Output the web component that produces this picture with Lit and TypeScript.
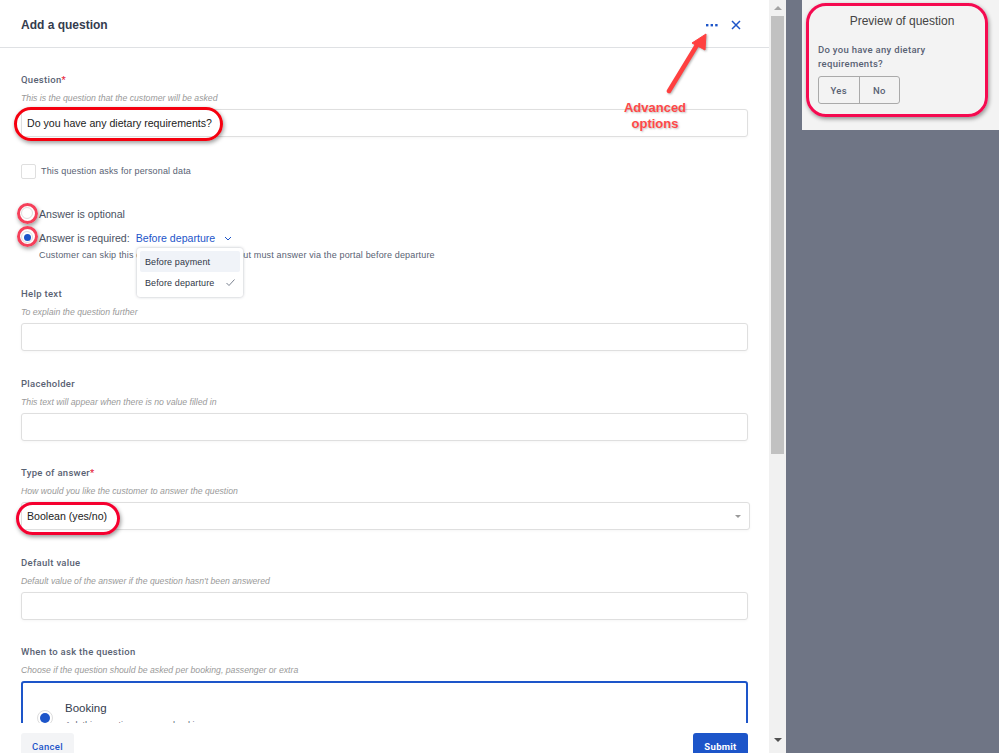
import { LitElement, html, css } from "lit";
import { customElement } from "lit/decorators.js";

@customElement("app-root")
export class AppRoot extends LitElement {
    static styles = css`
        :host {
            display: block;
            position: relative;
            width: 999px;
            height: 753px;
            overflow: hidden;
            background: #6f7585;
            font-family: "Liberation Sans", Arial, sans-serif;
            color: #333b4d;
        }

        .page {
            display: grid;
            grid-template-columns: 769px 17px 213px;
            height: 753px;
        }

        /* dialog */
        .dialog {
            display: flex;
            flex-direction: column;
            height: 753px;
            background: #fff;
            overflow: hidden;
        }

        .head {
            flex: none;
            box-sizing: border-box;
            height: 48px;
            padding: 0 28px 0 21px;
            border-bottom: 1px solid #dfe1e4;
            display: flex;
            align-items: center;
            justify-content: space-between;
        }

        .title {
            font-size: 12px;
            font-weight: bold;
            color: #343c4e;
            margin-top: 2px;
        }

        .head-icons {
            display: flex;
            align-items: center;
            gap: 13px;
            margin-top: 2px;
        }

        .body {
            flex: none;
            box-sizing: border-box;
            height: 675px;
            overflow: hidden;
            padding: 25px 21px 0;
        }

        .field {
            margin-bottom: 25.5px;
        }

        .label {
            font-family: Roboto, sans-serif;
            font-size: 9.5px;
            font-weight: 500;
            line-height: 14px;
            letter-spacing: 0.3px;
            color: #596273;
            margin-bottom: 4px;
        }

        .label i {
            font-style: normal;
            color: #e5233d;
        }

        .hint {
            font-size: 8.7px;
            font-style: italic;
            line-height: 14px;
            color: #9a9a9a;
            margin-bottom: 4px;
        }

        .input {
            box-sizing: border-box;
            height: 28px;
            border: 1px solid #dfdfdf;
            border-radius: 3px;
            padding: 0 5px;
            display: flex;
            align-items: center;
            justify-content: space-between;
            font-size: 10.6px;
            color: #222;
            background: #fff;
            box-shadow: 0 1px 3px rgba(0, 0, 0, 0.04);
        }

        .select {
            margin-right: -2px;
        }

        .caret {
            width: 0;
            height: 0;
            border-left: 3px solid transparent;
            border-right: 3px solid transparent;
            border-top: 3px solid #999;
            margin-right: 3px;
        }

        .check-row {
            display: flex;
            align-items: center;
            gap: 5px;
            height: 15px;
            margin-top: 27px;
            font-size: 9px;
            line-height: 13px;
            color: #596273;
            letter-spacing: 0.15px;
        }

        .checkbox {
            box-sizing: border-box;
            width: 15px;
            height: 15px;
            border: 1px solid #dfdfdf;
            border-radius: 2px;
        }

        .radios {
            margin-top: 28px;
            margin-bottom: 22px;
            height: 58px;
        }

        .radio-row {
            display: flex;
            align-items: center;
            height: 14px;
            font-size: 10.6px;
            color: #4a5262;
            padding-left: 18px;
            margin-bottom: 10px;
            position: relative;
        }

        .dot {
            position: absolute;
            left: 0;
            top: 0;
            box-sizing: border-box;
            width: 12px;
            height: 12px;
            border-radius: 50%;
            border: 1px solid #ddd;
            background: #fff;
        }

        .dot.on::after {
            content: "";
            position: absolute;
            left: 1.5px;
            top: 1.5px;
            width: 7px;
            height: 7px;
            border-radius: 50%;
            background: #1d55c9;
        }

        .link {
            color: #1d55c9;
            margin-left: 6px;
            margin-right: 9px;
        }

        .radio-sub {
            font-size: 9px;
            color: #596273;
            padding-left: 18px;
            margin-top: -6px;
            letter-spacing: 0.16px;
            line-height: 12px;
        }

        .required-wrap {
            position: relative;
        }

        .menu {
            position: absolute;
            left: 116px;
            top: 17px;
            box-sizing: border-box;
            width: 106px;
            height: 49px;
            padding: 3px;
            background: #fff;
            border-radius: 3px;
            box-shadow: 0 0 3px rgba(40, 50, 70, 0.35);
            font-size: 9px;
            color: #2f3646;
            letter-spacing: 0.12px;
        }

        .menu-item {
            height: 21px;
            display: flex;
            align-items: center;
            justify-content: space-between;
            padding: 0 5px;
            border-radius: 2px;
        }

        .menu-item.active {
            background: #f0f3f8;
        }

        .card {
            box-sizing: border-box;
            height: 120px;
            border: 2px solid #1d55c9;
            border-radius: 3px;
            padding: 18px 14px;
            display: flex;
            gap: 12px;
        }

        .card .big {
            flex: none;
            width: 16px;
            height: 16px;
            border-radius: 50%;
            border: 1px solid #ddd;
            box-sizing: border-box;
            margin-top: 9px;
            display: flex;
            align-items: center;
            justify-content: center;
        }

        .card .big::after {
            content: "";
            width: 10px;
            height: 10px;
            border-radius: 50%;
            background: #1d55c9;
        }

        .card-title {
            font-size: 11.5px;
            color: #343c4e;
            line-height: 14px;
            margin-bottom: 5px;
        }

        .card-sub {
            font-size: 9px;
            color: #596273;
        }

        .foot {
            flex: none;
            padding: 10px 21px 0;
            display: flex;
            justify-content: space-between;
            align-items: flex-start;
        }

        .btn {
            box-sizing: border-box;
            height: 30px;
            border-radius: 3px;
            display: flex;
            justify-content: center;
            padding-top: 8px;
            font-family: Roboto, sans-serif;
            font-size: 9.5px;
            font-weight: 500;
            letter-spacing: 0.3px;
        }

        .cancel {
            width: 53px;
            background: #f3f4f6;
            color: #1d55c9;
        }

        .submit {
            width: 55px;
            background: #1d55c9;
            color: #fff;
            font-weight: 700;
        }

        /* scrollbar */
        .scrollbar {
            background: #f1f1f1;
            display: flex;
            flex-direction: column;
            align-items: center;
        }

        .arrow-up,
        .arrow-down {
            flex: none;
            width: 0;
            height: 0;
            border-left: 4px solid transparent;
            border-right: 4px solid transparent;
        }

        .arrow-up {
            margin-top: 6px;
            border-bottom: 4px solid #a3a3a3;
        }

        .arrow-down {
            margin-top: 284px;
            border-top: 4px solid #505050;
        }

        .thumb {
            flex: none;
            width: 13px;
            height: 438px;
            margin-top: 6px;
            background: #c1c1c1;
        }

        /* right side */
        .side {
            padding-left: 16px;
        }

        .preview {
            box-sizing: border-box;
            height: 130px;
            background: #f3f3f3;
            padding: 14px 16px 0;
        }

        .preview-title {
            font-size: 12px;
            line-height: 14px;
            color: #444;
            text-align: center;
            margin-left: 3px;
            margin-bottom: 15px;
        }

        .preview-q {
            width: 120px;
            font-family: Roboto, sans-serif;
            font-size: 9.5px;
            font-weight: 500;
            line-height: 13.5px;
            letter-spacing: 0.3px;
            color: #596273;
            margin-bottom: 6px;
        }

        .toggle {
            display: flex;
            box-sizing: border-box;
            width: 82px;
            height: 28px;
            border: 1px solid #aaa;
            border-radius: 3px;
        }

        .toggle span {
            flex: 1;
            display: flex;
            align-items: center;
            justify-content: center;
            font-family: Roboto, sans-serif;
            font-size: 9.5px;
            font-weight: 500;
            letter-spacing: 0.3px;
            color: #596273;
        }

        .toggle span + span {
            border-left: 1px solid #aaa;
        }

        /* hand drawn annotations on top of the screenshot */
        .ring {
            position: absolute;
            box-sizing: border-box;
            box-shadow: 1px 2px 4px rgba(0, 0, 0, 0.4);
        }

        .ring-question {
            left: 14px;
            top: 107px;
            width: 209px;
            height: 34px;
            border: 3px solid #f5000f;
            border-radius: 17px;
        }

        .ring-answer {
            left: 16px;
            top: 502px;
            width: 104px;
            height: 33px;
            border: 3px solid #f5002f;
            border-radius: 17px;
        }

        .ring-radio {
            width: 21px;
            height: 21px;
            left: 17px;
            border: 3px solid #f5405a;
            border-radius: 50%;
        }

        .ring-preview {
            left: 806px;
            top: 3px;
            width: 182px;
            height: 114px;
            border: 3px solid #f50a50;
            border-radius: 20px;
        }

        .note {
            position: absolute;
            left: 610px;
            top: 100px;
            width: 90px;
            text-align: center;
            font-size: 13px;
            font-weight: bold;
            line-height: 16px;
            color: #ff4848;
            text-shadow: 1px 1px 2px rgba(0, 0, 0, 0.25);
        }

        .arrow {
            position: absolute;
            left: 660px;
            top: 28px;
            filter: drop-shadow(1px 1px 1px rgba(0, 0, 0, 0.3));
        }
    `;

    field(label: string, hint: string, required = false) {
        return html`
            <div class="label">${label}${required ? html`<i>*</i>` : ""}</div>
            <div class="hint">${hint}</div>
        `;
    }

    render() {
        return html`
            <div class="page">
                <div class="dialog">
                    <div class="head">
                        <div class="title">Add a question</div>
                        <div class="head-icons">
                            <svg width="12" height="4" viewBox="0 0 12 4"><g fill="#1d55c9"><rect x="0" y="1" width="2.4" height="2.4"/><rect x="4.6" y="1" width="2.4" height="2.4"/><rect x="9.2" y="1" width="2.4" height="2.4"/></g></svg>
                            <svg width="10" height="10" viewBox="0 0 10 10"><path d="M1 1l8 8M9 1l-8 8" stroke="#1d55c9" stroke-width="1.5" fill="none"/></svg>
                        </div>
                    </div>
                    <div class="body">
                        <div>
                            ${this.field("Question", "This is the question that the customer will be asked", true)}
                            <div class="input">Do you have any dietary requirements?</div>
                        </div>
                        <div class="check-row">
                            <span class="checkbox"></span>
                            This question asks for personal data
                        </div>
                        <div class="radios">
                            <div class="radio-row"><span class="dot"></span>Answer is optional</div>
                            <div class="required-wrap">
                                <div class="radio-row">
                                    <span class="dot on"></span>Answer is required:
                                    <span class="link">Before departure</span>
                                    <svg width="8" height="5" viewBox="0 0 8 5"><path d="M1 1l3 3 3-3" stroke="#1d55c9" fill="none"/></svg>
                                </div>
                                <div class="radio-sub">Customer can skip this question during booking but must answer via the portal before departure</div>
                                <div class="menu">
                                    <div class="menu-item active">Before payment</div>
                                    <div class="menu-item">
                                        Before departure
                                        <svg width="9" height="7" viewBox="0 0 9 7"><path d="M0.5 4l2.5 2.5 5.5-6" stroke="#596273" stroke-width="0.8" fill="none"/></svg>
                                    </div>
                                </div>
                            </div>
                        </div>
                        <div class="field">
                            ${this.field("Help text", "To explain the question further")}
                            <div class="input"></div>
                        </div>
                        <div class="field">
                            ${this.field("Placeholder", "This text will appear when there is no value filled in")}
                            <div class="input"></div>
                        </div>
                        <div class="field">
                            ${this.field("Type of answer", "How would you like the customer to answer the question", true)}
                            <div class="input select">Boolean (yes/no)<span class="caret"></span></div>
                        </div>
                        <div class="field">
                            ${this.field("Default value", "Default value of the answer if the question hasn't been answered")}
                            <div class="input"></div>
                        </div>
                        <div class="field">
                            ${this.field("When to ask the question", "Choose if the question should be asked per booking, passenger or extra")}
                            <div class="card">
                                <span class="big"></span>
                                <div>
                                    <div class="card-title">Booking</div>
                                    <div class="card-sub">Ask this question once per booking</div>
                                </div>
                            </div>
                        </div>
                    </div>
                    <div class="foot">
                        <div class="btn cancel">Cancel</div>
                        <div class="btn submit">Submit</div>
                    </div>
                </div>
                <div class="scrollbar">
                    <span class="arrow-up"></span>
                    <div class="thumb"></div>
                    <span class="arrow-down"></span>
                </div>
                <div class="side">
                    <div class="preview">
                        <div class="preview-title">Preview of question</div>
                        <div class="preview-q">Do you have any dietary requirements?</div>
                        <div class="toggle"><span>Yes</span><span>No</span></div>
                    </div>
                </div>
            </div>

            <div class="ring ring-question"></div>
            <div class="ring ring-answer"></div>
            <div class="ring ring-radio" style="top: 203px"></div>
            <div class="ring ring-radio" style="top: 226px"></div>
            <div class="ring ring-preview"></div>
            <svg class="arrow" width="50" height="68" viewBox="0 0 50 68">
                <path d="M9 63L37 17" stroke="#ff4040" stroke-width="4.5" stroke-linecap="round" fill="none"/>
                <path d="M46 6L32 15L45 22Z" fill="#ff4040" stroke="#ff4040" stroke-linejoin="round"/>
            </svg>
            <div class="note">Advanced<br />options</div>
        `;
    }
}
